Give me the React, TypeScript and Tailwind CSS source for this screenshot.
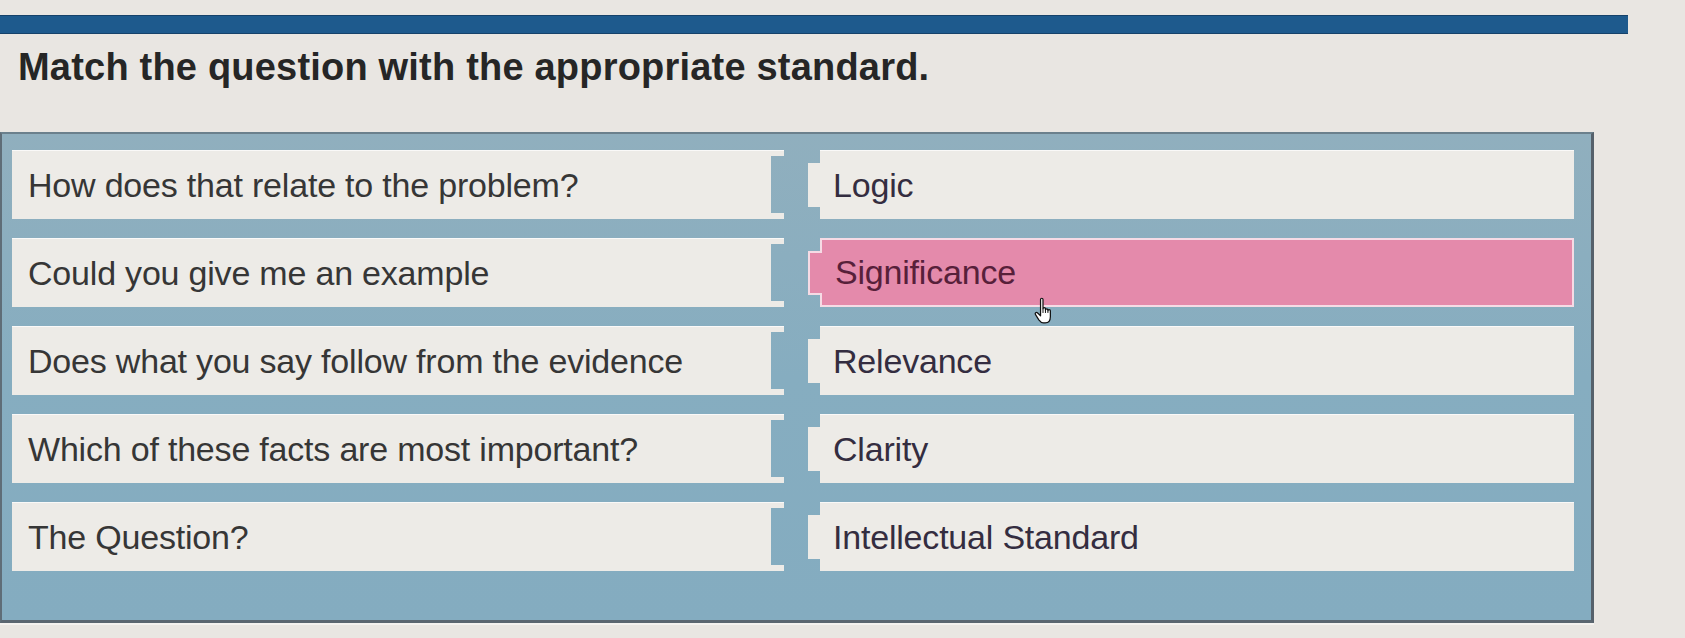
import React from "react";

type Pair = { question: string; standard: string; active?: boolean };

const pairs: Pair[] = [
  { question: "How does that relate to the problem?", standard: "Logic" },
  { question: "Could you give me an example", standard: "Significance", active: true },
  { question: "Does what you say follow from the evidence", standard: "Relevance" },
  { question: "Which of these facts are most important?", standard: "Clarity" },
  { question: "The Question?", standard: "Intellectual Standard" },
];

// left tile: flat body with a "]" shaped socket on its right edge
const QuestionTile: React.FC<{ text: string }> = ({ text }) => (
  <div className="flex w-[772px] h-[69px]">
    <div className="flex-1 flex items-center pl-4 bg-[#edebe7] border-t border-white/70 text-[34px] text-[#363636] tracking-[-0.2px]">
      {text}
    </div>
    <div className="w-[13px] flex flex-col justify-between">
      <div className="h-[6px] bg-[#edebe7] border-t border-white/70"></div>
      <div className="h-[6px] bg-[#edebe7]"></div>
    </div>
  </div>
);

// right tile: body with a plug sticking out on its left edge
const StandardTile: React.FC<{ text: string; active?: boolean }> = ({ text, active }) => (
  <div className="flex-1 flex items-center h-[69px]">
    <div
      className={`w-[14px] h-[44px] -mr-[2px] relative z-10 ${
        active ? "bg-[#e48aab] border-2 border-r-0 border-[#f6dbe5]" : "bg-[#edebe7]"
      }`}
    ></div>
    <div
      className={`flex-1 h-full flex items-center pl-[13px] text-[34px] tracking-[-0.2px] ${
        active
          ? "bg-[#e48aab] border-2 border-[#f6dbe5] text-[#57203a]"
          : "bg-[#edebe7] border-t border-white/70 text-[#342d40]"
      }`}
    >
      {text}
    </div>
  </div>
);

export default function App() {
  return (
    <div className="min-h-screen w-full bg-[#e9e6e2] overflow-hidden" style={{ fontFamily: '"Liberation Sans", Arial, sans-serif' }}>
      {/* top accent bar */}
      <div className="mt-[15px] h-[19px] w-[1628px] bg-[#1e5a8d] border-y border-[#16426a]"></div>

      <h1 className="mt-[14px] pl-[18px] text-[38px] leading-[38px] font-bold tracking-[0.2px] text-[#262626]">
        Match the question with the appropriate standard.
      </h1>

      {/* matching panel */}
      <div className="relative mt-[46px] w-[1594px] h-[491px] bg-gradient-to-b from-[#90afbe] via-[#86adc0] to-[#84acc0] border-t-2 border-l-2 border-r-[3px] border-b-[3px] border-t-[#6b808c] border-l-[#5f6d77] border-r-[#56616b] border-b-[#5a6670] pt-[16px] pl-[10px] pr-[17px]">
        <div className="flex flex-col gap-[19px]">
          {pairs.map((p) => (
            <div key={p.question} className="flex gap-[24px]">
              <QuestionTile text={p.question} />
              <StandardTile text={p.standard} active={p.active} />
            </div>
          ))}
        </div>

        {/* mouse cursor over the selected tile */}
        <svg
          className="absolute left-[1030px] top-[163px]"
          width="22"
          height="27"
          viewBox="0 0 16 22"
          fill="#ffffff"
          stroke="#111111"
          strokeWidth="1"
          strokeLinejoin="round"
        >
          <path d="M6 2C6 0.7 8 0.7 8 2V9.5C8 8.3 10 8.3 10 9.5V10.5C10 9.3 12 9.3 12 10.5V11.2C12 10 14 10 14 11.2V16C14 19 12.3 21 9.8 21H8.3C6.6 21 5.6 20 4.6 18.6L1.8 14.2C1.2 13.1 2.5 12.1 3.4 12.9L6 15.3Z" />
          <path d="M8 9.5V13M10 10.5V13M12 11.2V13" fill="none" strokeWidth="0.8" />
        </svg>
      </div>

      <div className="h-[2px] w-[1594px] bg-[#f4f2ef]"></div>
    </div>
  );
}
